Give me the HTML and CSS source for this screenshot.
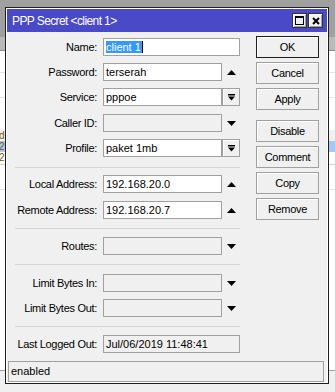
FILE: index.html
```html
<!DOCTYPE html>
<html>
<head>
<meta charset="utf-8">
<link rel="stylesheet" href="styles.css">
</head>
<body>
<div class="desk">
  <div class="backdrop">
    <div class="bd-top"></div>
    <div class="bd-bar"></div>
    <div class="bd-list">
      <div class="bd-row first"></div>
      <div class="bd-row"></div>
      <div class="bd-row plain"></div>
      <div class="bd-row head"><span>d</span></div>
      <div class="bd-row sel"><span>2</span></div>
      <div class="bd-row item"><span>2</span></div>
      <div class="bd-row"></div>
    </div>
  </div>

  <div class="dialog">
    <div class="titlebar">
      <span class="title">PPP Secret &lt;client 1&gt;</span>
      <div class="tbtns">
        <span class="tbtn"><svg width="9" height="9" viewBox="0 0 9 9"><rect x="0.5" y="0.5" width="8" height="8" fill="none" stroke="#000"/><rect x="0" y="0" width="9" height="2" fill="#000"/></svg></span>
        <span class="tbtn"><svg width="8" height="8" viewBox="0 0 8 8"><path d="M1 1L7 7M7 1L1 7" stroke="#000" stroke-width="2"/></svg></span>
      </div>
    </div>

    <div class="body">
      <div class="form">
        <div class="row">
          <label>Name:</label>
          <div class="field wide"><span class="selected">client 1</span></div>
        </div>
        <div class="row">
          <label>Password:</label>
          <div class="field">terserah</div>
          <span class="arrow"><svg width="9" height="5" viewBox="0 0 9 5"><path d="M0 5L4.5 0L9 5Z" fill="#000"/></svg></span>
        </div>
        <div class="row g8">
          <label>Service:</label>
          <div class="field">pppoe</div>
          <span class="drop"><svg width="7" height="7" viewBox="0 0 7 7"><rect x="0" y="0" width="7" height="1.5" fill="#000"/><path d="M0 2.5H7L3.5 6.5Z" fill="#000"/></svg></span>
        </div>
        <div class="row">
          <label>Caller ID:</label>
          <div class="field off"></div>
          <span class="arrow"><svg width="9" height="5" viewBox="0 0 9 5"><path d="M0 0L4.5 5L9 0Z" fill="#000"/></svg></span>
        </div>
        <div class="row">
          <label>Profile:</label>
          <div class="field">paket 1mb</div>
          <span class="drop"><svg width="7" height="7" viewBox="0 0 7 7"><rect x="0" y="0" width="7" height="1.5" fill="#000"/><path d="M0 2.5H7L3.5 6.5Z" fill="#000"/></svg></span>
        </div>

        <div class="sep"></div>

        <div class="row g8">
          <label>Local Address:</label>
          <div class="field">192.168.20.0</div>
          <span class="arrow"><svg width="9" height="5" viewBox="0 0 9 5"><path d="M0 5L4.5 0L9 5Z" fill="#000"/></svg></span>
        </div>
        <div class="row">
          <label>Remote Address:</label>
          <div class="field">192.168.20.7</div>
          <span class="arrow"><svg width="9" height="5" viewBox="0 0 9 5"><path d="M0 5L4.5 0L9 5Z" fill="#000"/></svg></span>
        </div>

        <div class="sep"></div>

        <div class="row">
          <label>Routes:</label>
          <div class="field off"></div>
          <span class="arrow"><svg width="9" height="5" viewBox="0 0 9 5"><path d="M0 0L4.5 5L9 0Z" fill="#000"/></svg></span>
        </div>

        <div class="sep wide-gap"></div>

        <div class="row">
          <label>Limit Bytes In:</label>
          <div class="field off"></div>
          <span class="arrow"><svg width="9" height="5" viewBox="0 0 9 5"><path d="M0 0L4.5 5L9 0Z" fill="#000"/></svg></span>
        </div>
        <div class="row">
          <label>Limit Bytes Out:</label>
          <div class="field off"></div>
          <span class="arrow"><svg width="9" height="5" viewBox="0 0 9 5"><path d="M0 0L4.5 5L9 0Z" fill="#000"/></svg></span>
        </div>

        <div class="sep narrow-gap"></div>

        <div class="row">
          <label>Last Logged Out:</label>
          <div class="field off wide">Jul/06/2019 11:48:41</div>
        </div>
      </div>

      <div class="buttons">
        <button class="btn default">OK</button>
        <button class="btn">Cancel</button>
        <button class="btn">Apply</button>
        <button class="btn gap">Disable</button>
        <button class="btn">Comment</button>
        <button class="btn">Copy</button>
        <button class="btn">Remove</button>
      </div>
    </div>

    <div class="status">enabled</div>
  </div>
</div>
</body>
</html>
```

FILE: styles.css
```css
* {
  box-sizing: border-box;
}
body {
  margin: 0;
  font-family: "Liberation Sans", Arial, sans-serif;
  font-size: 11px;
  color: #000;
  background: #f0f0f0;
}
.desk {
  position: relative;
  width: 335px;
  height: 392px;
  overflow: hidden;
}

/* window behind the dialog */
.backdrop {
  height: 392px;
  display: flex;
  flex-direction: column;
}
.bd-top {
  height: 37px;
  background: #a0a0a0;
}
.bd-bar {
  height: 14px;
  background: #bababa;
  border-bottom: 1px solid #8c8c8c;
}
.bd-list {
  height: 320px;
  background: #fff;
  border-bottom: 1px solid #a0a0a0;
}
.bd-row {
  height: 25px;
  border-bottom: 1px solid #e4e4e4;
  font-size: 10px;
  line-height: 11px;
  overflow: hidden;
}
.bd-row.first {
  height: 22px;
}
.bd-row.plain {
  height: 32px;
  border-bottom: 0;
}
.bd-row.head {
  height: 11px;
  background: #f0f0f0;
  border-bottom: 0;
}
.bd-row.sel {
  height: 11px;
  background: #a9c8f0;
  border-bottom: 0;
}
.bd-row.item {
  height: 13px;
  border-bottom: 1px solid #d0d0d0;
}
.bd-row span {
  margin-left: -1px;
  color: #7a5a00;
}

/* dialog */
.dialog {
  position: absolute;
  left: 5px;
  top: 7px;
  width: 324px;
  height: 377px;
  border: 1px solid #1e1e1e;
  background: #f0f0f0;
  box-shadow: inset 0 0 0 1px #fff;
  padding: 1px;
  display: flex;
  flex-direction: column;
}
.titlebar {
  height: 23px;
  background: #4a4ac8;
  display: flex;
  align-items: center;
  justify-content: space-between;
  padding: 0 4px 0 5px;
}
.title {
  color: #fff;
  font-size: 12px;
  letter-spacing: -0.6px;
}
.tbtns {
  display: flex;
  gap: 1px;
}
.tbtn {
  width: 15px;
  height: 15px;
  background: #f0f0f0;
  border: 1px solid #333;
  box-shadow: inset 1px 1px 0 #fff, inset -1px -1px 0 #a0a0a0;
  display: flex;
  align-items: center;
  justify-content: center;
}

.body {
  flex: 1;
  display: flex;
}
.form {
  width: 233px;
  padding-top: 6px;
  display: flex;
  flex-direction: column;
}
.row {
  display: flex;
  align-items: center;
  height: 18px;
  margin-bottom: 7px;
}
.row.g8 {
  margin-bottom: 8px;
}
.row label {
  width: 91px;
  margin-right: 5px;
  text-align: right;
  padding-right: 1px;
  letter-spacing: -0.3px;
  white-space: nowrap;
}
.field {
  width: 119px;
  height: 18px;
  border: 1px solid #a0a0a0;
  background: #fff;
  padding: 0 2px;
  line-height: 16px;
  white-space: nowrap;
  overflow: hidden;
}
.field.wide {
  width: 137px;
}
.field.off {
  background: #f0f0f0;
}
.selected {
  background: #3399ff;
  color: #fff;
  border-right: 1px solid #000;
  padding-right: 1px;
}
.arrow {
  width: 18px;
  display: flex;
  justify-content: center;
}
.drop {
  width: 18px;
  height: 18px;
  border: 1px solid #a0a0a0;
  background: #f0f0f0;
  box-shadow: inset 1px 1px 0 #fff;
  display: flex;
  align-items: center;
  justify-content: center;
}
.sep {
  height: 1px;
  width: 225px;
  margin: 3px 0 7px 8px;
  flex-shrink: 0;
  background: #d6d6d6;
}
.sep + .row + .row + .sep {
  margin: 2px 0 8px 8px;
}
.sep.wide-gap {
  margin: 2px 0 9px 8px;
}
.sep.narrow-gap {
  margin: 2px 0 7px 8px;
}

.buttons {
  padding: 4px 0 0 16px;
  display: flex;
  flex-direction: column;
  gap: 4px;
}
.btn {
  width: 63px;
  height: 22px;
  padding: 0;
  font-family: "Liberation Sans", Arial, sans-serif;
  font-size: 11px;
  letter-spacing: -0.3px;
  color: #000;
  background: #f0f0f0;
  border: 1px solid #a0a0a0;
  box-shadow: inset 1px 1px 0 #fff;
}
.btn.default {
  border-color: #1e1e1e;
}
.btn.gap {
  margin-top: 6px;
}

.status {
  height: 21px;
  margin: 0 3px 0 1px;
  border: 1px solid #a0a0a0;
  padding-left: 2px;
  line-height: 19px;
}
```
